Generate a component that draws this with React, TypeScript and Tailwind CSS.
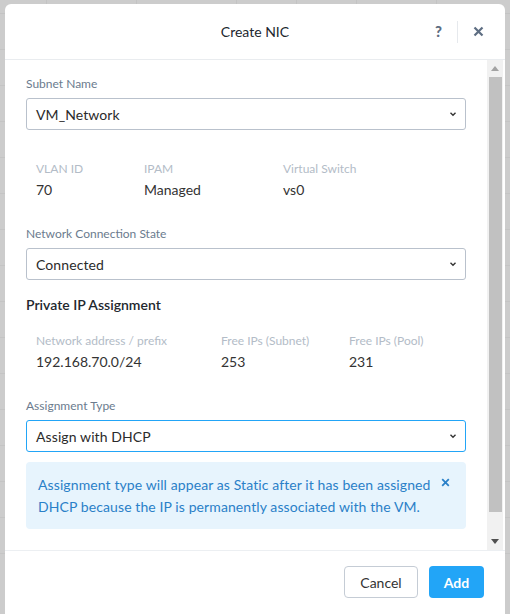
import * as React from "react";

const font = { fontFamily: "Lato, 'Open Sans', sans-serif" };

function Chevron() {
  return (
    <svg width="8" height="6" viewBox="0 0 8 6" className="text-[#333]">
      <path d="M1.5 1.8 L4 4.2 L6.5 1.8" fill="none" stroke="currentColor" strokeWidth="1.4" />
    </svg>
  );
}

function Select({ value, active }: { value: string; active?: boolean }) {
  return (
    <div
      className={
        active
          ? "flex h-[32px] items-center justify-between rounded-[3px] border border-[#22a5f7] pl-[9px] pr-[8px]"
          : "flex h-[32px] items-center justify-between rounded-[3px] border border-[#b9c1cc] pl-[9px] pr-[8px]"
      }
    >
      <span className="text-[14px] tracking-[0.1px] text-[#2b2b2b]">{value}</span>
      <Chevron />
    </div>
  );
}

function Label({ children }: { children: React.ReactNode }) {
  return <div className="text-[12px] leading-[16px] text-[#6b7b8e]">{children}</div>;
}

function Stat({ label, value, width }: { label: string; value: string; width: string }) {
  return (
    <div className={width}>
      <div className="text-[12px] leading-[16px] text-[#b3bcc7]">{label}</div>
      <div className="mt-[3px] text-[14px] leading-[20px] text-[#333]">{value}</div>
    </div>
  );
}

export default function App() {
  return (
    <div className="relative h-[614px] w-[510px] overflow-hidden bg-[#cccccc]" style={font}>
      {/* faded table behind the overlay */}
      <div className="flex h-[14px] border-b border-[#c3c3c3]">
        <div className="w-[47px] border-r border-[#c3c3c3]" />
        <div className="w-[90px] border-r border-[#c3c3c3]" />
        <div className="w-[100px] border-r border-[#c3c3c3]" />
        <div className="w-[60px] border-r border-[#c3c3c3]" />
        <div className="w-[60px] border-r border-[#c3c3c3]" />
        <div className="w-[80px] border-r border-[#c3c3c3]" />
      </div>
      <div className="flex flex-col">
        {Array.from({ length: 15 }).map((_, i) => (
          <div key={i} className="h-[36px] border-b border-[#c4c4c4]" />
        ))}
      </div>

      <div className="absolute left-[5px] top-[4px] flex h-[620px] w-[500px] flex-col rounded-t-[6px] bg-white">
        {/* header */}
        <div className="relative flex h-[56px] items-center justify-center border-b border-[#e9ecef]">
          <span className="text-[14px] text-[#22272e]">Create NIC</span>
          <div className="absolute right-[21px] top-0 flex h-full items-center">
            <span className="text-[15px] font-black text-[#5d6d82]">?</span>
            <div className="ml-[15px] h-[22px] w-px bg-[#e6e9ed]" />
            <svg width="11" height="11" viewBox="0 0 11 11" className="ml-[15px] text-[#5d6d82]">
              <path d="M1.5 1.5 L9.5 9.5 M9.5 1.5 L1.5 9.5" stroke="currentColor" strokeWidth="2.2" />
            </svg>
          </div>
        </div>

        {/* body */}
        <div className="flex h-[490px]">
          <div className="flex-1 px-[21px] pt-[16px]">
            <Label>Subnet Name</Label>
            <div className="mt-[6px]">
              <Select value="VM_Network" />
            </div>

            <div className="mt-[31px] flex pl-[10px]">
              <Stat label="VLAN ID" value="70" width="w-[108px]" />
              <Stat label="IPAM" value="Managed" width="w-[139px]" />
              <Stat label="Virtual Switch" value="vs0" width="w-[100px]" />
            </div>

            <div className="mt-[26px]">
              <Label>Network Connection State</Label>
            </div>
            <div className="mt-[6px]">
              <Select value="Connected" />
            </div>

            <div className="mt-[15px] text-[14px] font-semibold leading-[20px] text-[#22272e]">
              Private IP Assignment
            </div>

            <div className="mt-[18px] flex pl-[10px]">
              <Stat label="Network address / prefix" value="192.168.70.0/24" width="w-[185px]" />
              <Stat label="Free IPs (Subnet)" value="253" width="w-[128px]" />
              <Stat label="Free IPs (Pool)" value="231" width="w-[100px]" />
            </div>

            <div className="mt-[26px]">
              <Label>Assignment Type</Label>
            </div>
            <div className="mt-[6px]">
              <Select value="Assign with DHCP" active />
            </div>

            <div className="mt-[10px] flex items-start justify-between rounded-[4px] bg-[#e7f4fd] pb-[11px] pl-[12px] pr-[16px] pt-[12px]">
              <p className="text-[14px] leading-[22px] tracking-[0.1px] text-[#2a80c8]">
                Assignment type will appear as Static after it has been assigned DHCP because the IP is permanently associated with the VM.
              </p>
              <svg width="9" height="9" viewBox="0 0 9 9" className="ml-[10px] mt-[4px] shrink-0 text-[#2a80c8]">
                <path d="M1.2 1.2 L7.8 7.8 M7.8 1.2 L1.2 7.8" stroke="currentColor" strokeWidth="1.8" />
              </svg>
            </div>
          </div>

          {/* scrollbar */}
          <div className="mr-[2px] flex w-[16px] flex-col items-center bg-[#f1f1f1]">
            <div className="flex h-[17px] items-center">
              <svg width="8" height="5" viewBox="0 0 8 5"><path d="M0 5 L4 0 L8 5 Z" fill="#a3a3a3" /></svg>
            </div>
            <div className="h-[435px] w-[13px] bg-[#c1c1c1]" />
            <div className="flex flex-1 items-end pb-[6px]">
              <svg width="8" height="5" viewBox="0 0 8 5"><path d="M0 0 L8 0 L4 5 Z" fill="#505050" /></svg>
            </div>
          </div>
        </div>

        {/* footer */}
        <div className="flex justify-end gap-[11px] border-t border-[#eceff2] pr-[21px] pt-[15px]">
          <button className="h-[32px] w-[74px] rounded-[4px] border border-[#c5ccd5] text-[14px] text-[#333]">
            Cancel
          </button>
          <button className="h-[32px] w-[55px] rounded-[4px] bg-[#22a5f7] text-[14px] font-bold text-white">
            Add
          </button>
        </div>
      </div>
    </div>
  );
}
